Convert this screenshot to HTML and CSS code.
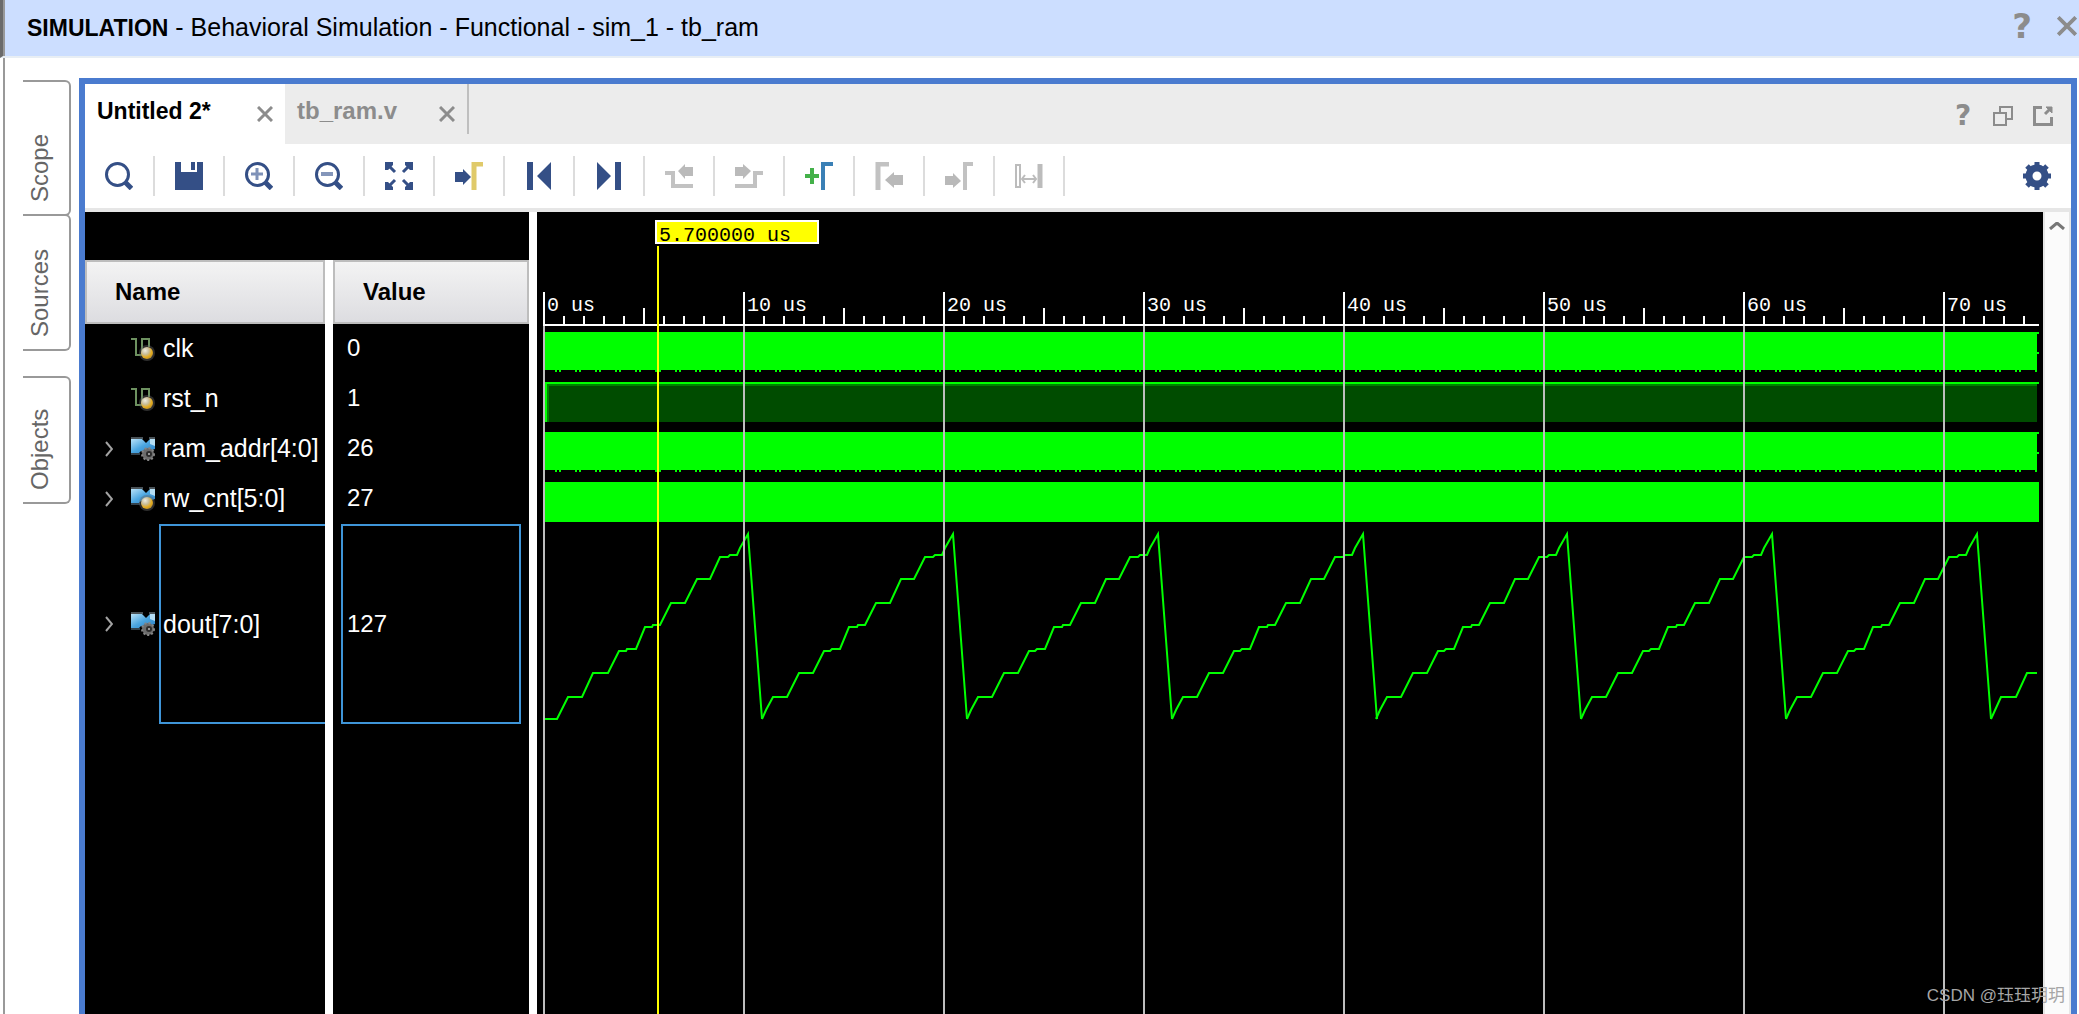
FILE: index.html
```html
<!DOCTYPE html>
<html lang="en">
<head>
<meta charset="utf-8">
<title>Simulation - tb_ram</title>
<link rel="stylesheet" href="styles.css">
</head>
<body>
<svg class="defs" aria-hidden="true">
  <defs>
    <linearGradient id="blue" x1="0" y1="0" x2="1" y2="1">
      <stop offset="0" stop-color="#b9e2f8"/><stop offset=".5" stop-color="#4aa5e0"/><stop offset="1" stop-color="#2a7fc4"/>
    </linearGradient>
    <radialGradient id="gold" cx=".35" cy=".3" r=".8">
      <stop offset="0" stop-color="#f0ecdf"/><stop offset=".4" stop-color="#c9bd98"/><stop offset=".7" stop-color="#e6ac1c"/><stop offset="1" stop-color="#a8843a"/>
    </radialGradient>
    <symbol id="ball" viewBox="0 0 24 24">
      <circle cx="16" cy="16" r="8" fill="#666" opacity=".45"/>
      <circle cx="16" cy="16" r="6" fill="url(#gold)"/>
    </symbol>
    <symbol id="cog" viewBox="0 0 24 24">
      <circle cx="17" cy="17" r="6" fill="#6c6c6c" stroke="#858585" stroke-width="2" stroke-dasharray="2 2"/>
      <circle cx="18" cy="17" r="3" fill="#2c2c2c"/><circle cx="18" cy="17" r="1" fill="#bbb"/>
    </symbol>
    <symbol id="scalar" viewBox="0 0 24 24">
      <path d="M0 2h5v16h6V2h7v8" fill="none" stroke="#6d9160" stroke-width="2"/>
      <use href="#ball" width="24" height="24"/>
    </symbol>
    <symbol id="bus" viewBox="0 0 24 24">
      <path d="M0 0h12v2H0zM18 0h6v2h-6z" fill="#4a5257"/>
      <path d="M0 2h11l4 4 4-4h5v10l-6 2H10l-2 2H0z" fill="url(#blue)"/>
      <path d="M0 16h9v2H0z" fill="#33414b"/><path d="M19 2h5v7l-5-2z" fill="#b4ddf4"/>
    </symbol>
    <symbol id="chev" viewBox="0 0 8 16"><path d="M1 1l6 7-6 7" fill="none" stroke="#a3a3a3" stroke-width="2"/></symbol>
    <symbol id="lens" viewBox="0 0 28 28">
      <circle cx="12.500" cy="12.500" r="11" fill="none" stroke="#344f86" stroke-width="3"/>
      <path d="M20 20l6.500 6.500" stroke="#344f86" stroke-width="5"/>
    </symbol>
    <symbol id="cross" viewBox="0 0 16 16"><path d="M1 1l14 14M15 1L1 15" stroke="#8c8c8c" stroke-width="3"/></symbol>
  </defs>
</svg>

<header class="titlebar">
  <h1><b>SIMULATION</b> - Behavioral Simulation - Functional - sim_1 - tb_ram</h1>
  <button class="help big" aria-label="Help">?</button>
  <button aria-label="Close"><svg width="20" height="20"><use href="#cross"/></svg></button>
</header>

<div class="workspace">
  <nav class="side">
    <button class="side-tab scope">Scope</button>
    <button class="side-tab sources">Sources</button>
    <button class="side-tab objects">Objects</button>
  </nav>

  <main class="panel">
    <div class="tabs">
      <div class="tab active"><span>Untitled 2*</span><button aria-label="Close Untitled 2"><svg width="16" height="16"><use href="#cross"/></svg></button></div>
      <div class="tab"><span>tb_ram.v</span><button aria-label="Close tb_ram.v"><svg width="16" height="16"><use href="#cross"/></svg></button></div>
      <div class="window-tools">
        <button class="help" aria-label="Help">?</button>
        <button aria-label="Float"><svg width="20" height="20" fill="none" stroke="#8c8c8c" stroke-width="2"><path d="M7 7V1h12v12h-6M1 7h12v12H1z"/></svg></button>
        <button aria-label="Maximize"><svg width="20" height="20" fill="none" stroke="#8c8c8c"><path d="M9 1.500H1.500v17h17V11" stroke-width="3"/><path d="M12 8l4-4" stroke-width="3"/><path d="M13 1h6v6z" fill="#8c8c8c"/></svg></button>
      </div>
    </div>

    <div class="toolbar">
      <button aria-label="Search"><svg><use href="#lens"/></svg></button>
      <button aria-label="Save"><svg fill="#344f86"><path d="M0 0h6v10h16V0h6v28H0z"/><path d="M16 0h4v8h-4z"/></svg></button>
      <button aria-label="Zoom in"><svg><use href="#lens"/><path d="M6 12h12M12 6v12" stroke="#7f92b8" stroke-width="3"/></svg></button>
      <button aria-label="Zoom out"><svg><use href="#lens"/><path d="M6 12h12" stroke="#8496ba" stroke-width="4"/></svg></button>
      <button aria-label="Zoom fit"><svg fill="#344f86" stroke="#344f86"><path stroke="none" d="M0 0h8v3L3 8H0zM28 0h-8v3l5 5h3zM0 28h8v-3l-5-5H0zM28 28h-8v-3l5-5h3z"/><path stroke-width="3" d="M4 4l6 6M24 4l-6 6M4 24l6-6M24 24l-6-6"/></svg></button>
      <button aria-label="Go to cursor"><svg><path d="M0 10h8V7l8 8-8 8v-3H0z" fill="#344f86"/><path d="M19 28V2h9" fill="none" stroke="#e0ca6a" stroke-width="5"/></svg></button>
      <button aria-label="Go to time 0"><svg fill="#344f86"><path d="M2 0h6v28H2zM26 0v28L12 14z"/></svg></button>
      <button aria-label="Go to last time"><svg fill="#344f86"><path d="M20 0h6v28h-6zM2 0v28l14-14z"/></svg></button>
      <button aria-label="Previous transition"><svg><path d="M28 5h-8V2l-7 7 7 8v-3h8z" fill="#bababa"/><path d="M0 11h8v13h20" fill="none" stroke="#c2c2c2" stroke-width="4"/></svg></button>
      <button aria-label="Next transition"><svg><path d="M0 5h8V2l8 7-8 8v-3H0z" fill="#bababa"/><path d="M28 11h-8v13H0" fill="none" stroke="#c2c2c2" stroke-width="4"/></svg></button>
      <button aria-label="Add marker"><svg><path d="M0 14h14M7 6v16" stroke="#44b14a" stroke-width="4"/><path d="M18 28V2h10" fill="none" stroke="#3a80b6" stroke-width="4"/></svg></button>
      <button aria-label="Previous marker"><svg><path d="M28 13h-9v-3l-9 8 9 8v-3h9z" fill="#b9b9b9"/><path d="M3 28V2h11" fill="none" stroke="#c2c2c2" stroke-width="5"/></svg></button>
      <button aria-label="Next marker"><svg><path d="M0 14h8v-3l8 8-8 7v-3H0z" fill="#b9b9b9"/><path d="M20 28V2h8" fill="none" stroke="#c2c2c2" stroke-width="4"/></svg></button>
      <button aria-label="Swap cursors"><svg fill="none" stroke="#bcbcbc" stroke-width="2"><path d="M1 3h4v22H1z"/><path d="M25 2v24" stroke-width="5"/><path d="M7 17h14M10 13l-3 4 3 4M18 13l3 4-3 4"/></svg></button>
      <button class="settings" aria-label="Settings"><svg><circle cx="14" cy="14" r="8" fill="none" stroke="#344f86" stroke-width="7"/><path d="M14 0v5M14 23v5M0 14h5M23 14h5M4 4l4 4M20 20l4 4M24 4l-4 4M8 20l-4 4" stroke="#344f86" stroke-width="5"/></svg></button>
    </div>

    <div class="viewer">
      <div class="signals">
        <table>
          <thead><tr><th class="name">Name</th><th>Value</th></tr></thead>
          <tbody>
            <tr><td class="name"><div class="sig"><i></i><svg><use href="#scalar"/></svg><span>clk</span></div></td><td><div class="val">0</div></td></tr>
            <tr><td class="name"><div class="sig"><i></i><svg><use href="#scalar"/></svg><span>rst_n</span></div></td><td><div class="val">1</div></td></tr>
            <tr><td class="name"><div class="sig"><i><svg><use href="#chev"/></svg></i><svg><use href="#bus"/><use href="#cog"/></svg><span>ram_addr[4:0]</span></div></td><td><div class="val">26</div></td></tr>
            <tr><td class="name"><div class="sig"><i><svg><use href="#chev"/></svg></i><svg><use href="#bus"/><use href="#ball"/></svg><span>rw_cnt[5:0]</span></div></td><td><div class="val">27</div></td></tr>
            <tr class="selected"><td class="name"><div class="sig"><i><svg><use href="#chev"/></svg></i><svg><use href="#bus"/><use href="#cog"/></svg><span>dout[7:0]</span></div></td><td><div class="val">127</div></td></tr>
          </tbody>
        </table>
      </div>

      <div class="waves">
        <svg class="plot" shape-rendering="crispEdges">
          <defs>
            <pattern id="minor" width="20" height="10" y="104" patternUnits="userSpaceOnUse"><path d="M0 0h2v10H0z" fill="#fff"/></pattern>
            <pattern id="mid" width="100" height="18" y="96" patternUnits="userSpaceOnUse"><path d="M0 0h2v18H0z" fill="#fff"/></pattern>
            <pattern id="major" width="200" height="34" y="80" patternUnits="userSpaceOnUse"><path d="M0 0h2v34H0z" fill="#fff"/></pattern>
            <pattern id="grid" width="200" height="200" patternUnits="userSpaceOnUse"><path d="M0 0h2v200H0z" fill="#bebebe"/></pattern>
            <pattern id="dots" width="20" height="2" patternUnits="userSpaceOnUse"><path d="M12 0h2v2h-2zM16 0h2v2h-2z" fill="#0f0"/></pattern>
            <path id="ramp" d="M219 507L223 498L230 485H244L256 461H270L281 439H287L289 437H297L306 415H314L315 413H322L333 391H347L358 367H371L382 345H390L392 343H399L402 336L410 322L424 507"/>
          </defs>
          <g fill="#0f0">
            <rect class="short" x="2" y="120" height="38"/><rect class="full" x="2" y="120" height="2"/><rect class="full" x="2" y="140" height="2"/>
            <rect class="short" x="2" y="220" height="38"/><rect class="full" x="2" y="220" height="2"/><rect class="full" x="2" y="240" height="2"/>
            <rect class="full" x="2" y="270" height="40"/>
          </g>
          <rect class="short" x="2" y="158" height="2" fill="url(#dots)"/>
          <rect class="short" x="2" y="258" height="2" fill="url(#dots)"/>
          <rect class="short" x="2" y="170" height="40" fill="#004c00"/>
          <path d="M4 172h2v38H4z" fill="#008000"/>
          <rect class="short" x="2" y="172" height="2" fill="#008000"/>
          <rect class="full" x="2" y="170" height="2" fill="#0f0"/>
          <path d="M2 170h2v40H2z" fill="#0f0"/>
          <g fill="none" stroke="#0f0" stroke-width="2" shape-rendering="auto">
            <path d="M2 507H14L25 485H39L50 461H65L76 439H83L84 437H93L102 415H109L110 413H117L128 391H142L154 367H167L177 345H185L187 343H194L197 336L205 322L219 507"/>
            <use href="#ramp"/><use href="#ramp" x="205"/><use href="#ramp" x="410"/><use href="#ramp" x="614"/><use href="#ramp" x="819"/><use href="#ramp" x="1024"/>
            <path d="M1448 507L1458 485H1473L1484 461H1494"/>
          </g>
          <rect y="114" width="100%" height="100%" fill="url(#grid)"/>
          <rect y="104" width="100%" height="10" fill="url(#minor)"/>
          <rect y="96" width="100%" height="18" fill="url(#mid)"/>
          <rect y="80" width="100%" height="34" fill="url(#major)"/>
          <rect y="112" width="100%" height="2" fill="#fff"/>
          <g class="ticks">
            <text x="4" y="99">0 us</text><text x="204" y="99">10 us</text><text x="404" y="99">20 us</text><text x="604" y="99">30 us</text>
            <text x="804" y="99">40 us</text><text x="1004" y="99">50 us</text><text x="1204" y="99">60 us</text><text x="1404" y="99">70 us</text>
          </g>
          <rect x="114" y="34" width="2" height="100%" fill="#ff0"/>
          <rect x="113" y="9" width="162" height="22" fill="#ff0" stroke="#fff" stroke-width="2"/>
          <text class="cursor" x="116" y="29">5.700000 us</text>
        </svg>
      </div>

      <div class="scroll"><button aria-label="Scroll up"><svg width="16" height="8"><path d="M1 7l7-6 7 6" fill="none" stroke="#777" stroke-width="3"/></svg></button></div>
    </div>
  </main>
</div>
<div class="watermark">CSDN @珏珏玥玥</div>
</body>
</html>
```
FILE: styles.css
```css
* { box-sizing: border-box; }
body {
  margin: 0;
  height: 100vh;
  overflow: hidden;
  display: flex;
  flex-direction: column;
  font-family: "Liberation Sans", Arial, sans-serif;
  font-size: 24px;
  line-height: 28px;
  color: #000;
  background: #fff;
}
button {
  display: block;
  padding: 0;
  border: 0;
  background: none;
  font: inherit;
  color: inherit;
}
svg { display: block; }
.defs { position: absolute; width: 0; height: 0; }

.titlebar {
  flex: none;
  display: flex;
  align-items: center;
  gap: 24px;
  height: 58px;
  padding: 0 2px 4px 24px;
  background: #ccdeff;
  border-left: 3px solid #6b6b6b;
  border-bottom: 2px solid #e8eef4;
  box-shadow: inset 2px 0 #999;
}
.titlebar h1 { flex: 1; margin: 0; padding-top: 2px; font-size: 25px; font-weight: 400; }
.titlebar b { font-size: 23px; }
.help { width: 20px; font: bold 28px/20px "DejaVu Sans", sans-serif; color: #8c8c8c; }
.help.big { width: 22px; font-size: 34px; line-height: 24px; }

.workspace {
  flex: 1;
  min-height: 0;
  display: flex;
  margin-left: 3px;
  padding: 20px 2px 0 0;
  border-left: 2px solid #999;
}
.side { width: 74px; padding: 2px 8px 0 18px; }
.side-tab {
  display: flex;
  align-items: center;
  justify-content: flex-start;
  width: 48px;
  padding: 12px 4px 12px 16px;
  border: solid #999;
  border-width: 2px 0 2px 2px;
  border-radius: 6px 0 0 6px;
  writing-mode: vertical-rl;
  color: #666;
  transform: rotate(180deg);
}
.scope { height: 136px; }
.sources { height: 137px; margin-top: -2px; }
.objects { height: 128px; margin-top: 25px; }

.panel {
  flex: 1;
  min-width: 0;
  display: flex;
  flex-direction: column;
  border: 6px solid #4a7bcf;
  border-bottom: 0;
}
.tabs { flex: none; display: flex; align-items: flex-start; height: 60px; background: #ececec; }
.tab {
  display: flex;
  align-items: center;
  justify-content: space-between;
  width: 184px;
  height: 50px;
  padding: 4px 12px 0 12px;
  border-right: 2px solid #bfbfbf;
  font-weight: 700;
  color: #8c8c8c;
}
.tab button { margin-top: 6px; }
.tab.active { width: 200px; height: 60px; padding-bottom: 10px; border-right: 0; background: #fff; color: #000; }
.tab.active span { font-size: 23px; }
.window-tools { display: flex; gap: 20px; margin-left: auto; padding: 22px 18px 0 0; }

.toolbar {
  flex: none;
  display: flex;
  align-items: center;
  height: 68px;
  border-bottom: 4px solid #e6e6e6;
}
.toolbar button { width: 70px; height: 40px; padding: 0 20px; border-right: 2px solid #dcdcdc; }
.toolbar svg { width: 28px; height: 28px; }
.toolbar .settings { width: 68px; margin-left: auto; border-right: 0; }

.viewer { flex: 1; min-height: 0; display: flex; background: #000; }
.signals {
  width: 444px;
  padding-top: 48px;
  background: linear-gradient(90deg, #000 240px, #fff 240px, #fff 248px, #000 248px) 0 48px no-repeat #000;
  color: #fff;
}
table { width: 444px; table-layout: fixed; border-collapse: separate; border-spacing: 0; }
th {
  height: 64px;
  padding: 0 0 0 30px;
  text-align: left;
  color: #000;
  background: linear-gradient(#f4f4f4, #dcdce0) padding-box;
  box-shadow: inset 0 0 0 2px #bdbdbd;
}
th.name, td.name { width: 248px; border-right: 8px solid #fff; }
td { height: 50px; padding: 0; font-size: 25px; }
.sig { display: flex; align-items: center; height: 50px; padding-left: 20px; }
.sig i { width: 26px; }
.sig i svg { width: 8px; height: 16px; }
.sig > svg { flex: none; width: 24px; height: 24px; }
.sig span, .val { display: flex; align-items: center; height: 50px; padding-bottom: 2px; }
.sig span { flex: 1; margin-left: 4px; padding-left: 4px; }
.val { margin: 0 8px; padding-left: 6px; font-size: 24px; }
.selected .sig, .selected .val, .selected span { height: 200px; padding-bottom: 0; }
.selected span { border: 2px solid #3f95d8; border-right: 0; padding-left: 2px; }
.selected .val { border: 2px solid #3f95d8; padding-left: 4px; }

.waves { flex: 1; min-width: 0; padding: 0 4px 0 6px; border-left: 8px solid #fff; }
.plot { width: 100%; height: 100%; }
.full { width: calc(100% - 2px); }
.short { width: calc(100% - 4px); }
.ticks, .cursor { font-family: "Liberation Mono", monospace; font-size: 20px; }
.ticks { fill: #fff; }

.scroll { width: 28px; padding: 10px 4px 0; background: #fbfbfb; border: 2px solid #e6e6e6; border-width: 0 2px; }

.watermark {
  position: absolute;
  right: 14px;
  bottom: 7px;
  font: 17px/22px "Liberation Sans", "Noto Sans CJK SC", sans-serif;
  color: #a6a6a6;
}
```
